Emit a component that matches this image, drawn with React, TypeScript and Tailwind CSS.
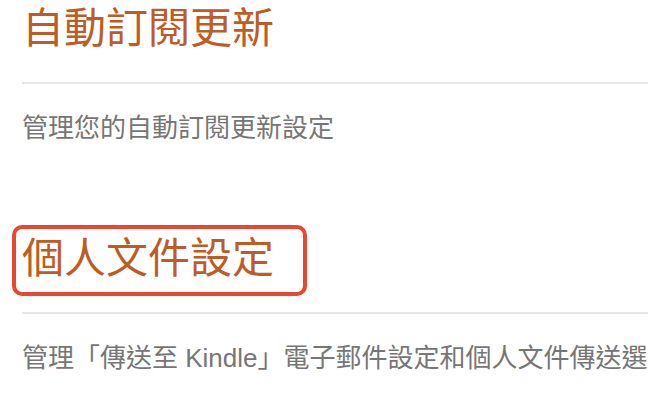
const font = { fontFamily: '"Liberation Sans", "Noto Sans CJK TC", sans-serif' };

function Section({ title, desc, highlight }: { title: string; desc: string; highlight?: boolean }) {
    return (
        <section>
            <div className="relative inline-block">
                <h2 className="text-[42px] leading-none text-[#bd5c26] font-normal whitespace-nowrap">{title}</h2>
                {highlight && (
                    <div className="absolute left-[-10px] top-[-13px] w-[295px] h-[71px] border-4 border-[#e9472f] rounded-[10px] pointer-events-none" />
                )}
            </div>
            <div className="mt-[32px] h-[2px] bg-[#e7e7e7]" />
            <p className="mt-[31px] text-[26px] leading-none text-[#767676] whitespace-nowrap">{desc}</p>
        </section>
    );
}

export default function App() {
    return (
        <div className="w-[648px] h-[400px] overflow-hidden bg-white pl-[22px] pt-[8px]" style={font}>
            <Section title="自動訂閱更新" desc="管理您的自動訂閱更新設定" />
            <div className="h-[97px]" />
            <Section title="個人文件設定" desc="管理「傳送至 Kindle」電子郵件設定和個人文件傳送選項" highlight />
        </div>
    );
}
